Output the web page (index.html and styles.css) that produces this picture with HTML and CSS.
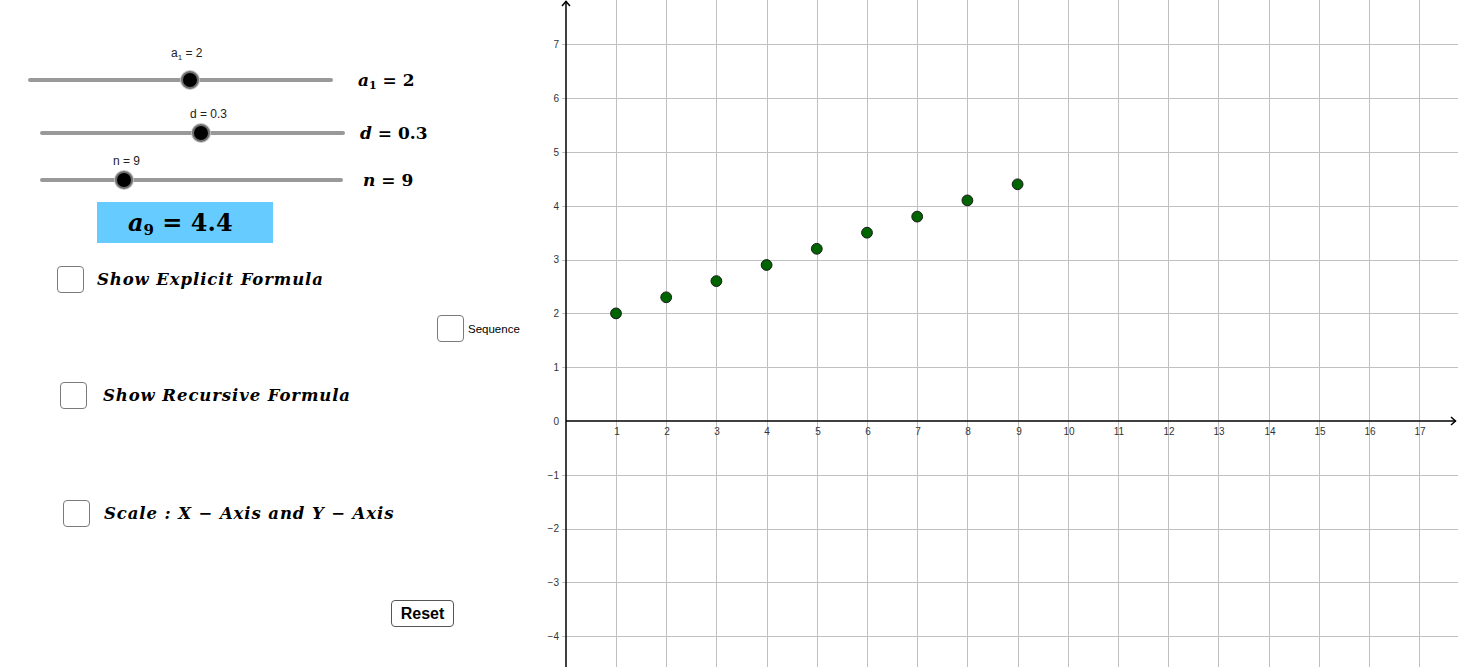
FILE: index.html
```html
<!DOCTYPE html>
<html>
<head>
<meta charset="utf-8">
<link rel="stylesheet" href="styles.css">
</head>
<body>
<div class="app">
  <div class="panel">
    <div class="row row-s1">
      <div class="slider">
        <div class="track"></div>
        <div class="knob" style="left:162px"></div>
        <div class="slabel s1lab" style="left:143px">a<sub>1</sub> = 2</div>
      </div>
      <div class="math mlab1"><i>a</i><sub>1</sub> <span class="eq">=</span> <span class="num">2</span></div>
    </div>
    <div class="row row-s2">
      <div class="slider">
        <div class="track"></div>
        <div class="knob" style="left:161px"></div>
        <div class="slabel" style="left:150px">d = 0.3</div>
      </div>
      <div class="math mlab2"><i>d</i> <span class="eq">=</span> <span class="num">0.3</span></div>
    </div>
    <div class="row row-s3">
      <div class="slider short">
        <div class="track"></div>
        <div class="knob" style="left:84px"></div>
        <div class="slabel" style="left:73px">n = 9</div>
      </div>
      <div class="math mlab3"><i>n</i> <span class="eq">=</span> <span class="num">9</span></div>
    </div>
    <div class="result"><span class="math big"><i>a</i><sub>9</sub> <span class="eq">=</span> <span class="num">4.4</span></span></div>
    <div class="cbrow cb1"><span class="box"></span><span class="math ital">Show Explicit Formula</span></div>
    <div class="cbrow cbseq"><span class="box"></span><span class="seqtext">Sequence</span></div>
    <div class="cbrow cb2"><span class="box"></span><span class="math ital">Show Recursive Formula</span></div>
    <div class="cbrow cb3"><span class="box"></span><span class="math ital">Scale : X − Axis and Y − Axis</span></div>
    <div class="btnrow"><button class="reset">Reset</button></div>
  </div>
  <svg class="graph" viewBox="535 0 923 667" width="923" height="667" xmlns="http://www.w3.org/2000/svg">
    <g class="grid" stroke="#c0c0c0" stroke-width="1" shape-rendering="crispEdges">
      <line x1="616" y1="0" x2="616" y2="667"/>
      <line x1="666" y1="0" x2="666" y2="667"/>
      <line x1="716" y1="0" x2="716" y2="667"/>
      <line x1="767" y1="0" x2="767" y2="667"/>
      <line x1="817" y1="0" x2="817" y2="667"/>
      <line x1="867" y1="0" x2="867" y2="667"/>
      <line x1="917" y1="0" x2="917" y2="667"/>
      <line x1="967" y1="0" x2="967" y2="667"/>
      <line x1="1018" y1="0" x2="1018" y2="667"/>
      <line x1="1068" y1="0" x2="1068" y2="667"/>
      <line x1="1118" y1="0" x2="1118" y2="667"/>
      <line x1="1168" y1="0" x2="1168" y2="667"/>
      <line x1="1218" y1="0" x2="1218" y2="667"/>
      <line x1="1269" y1="0" x2="1269" y2="667"/>
      <line x1="1319" y1="0" x2="1319" y2="667"/>
      <line x1="1369" y1="0" x2="1369" y2="667"/>
      <line x1="1419" y1="0" x2="1419" y2="667"/>
      <line x1="562" y1="44" x2="1458" y2="44"/>
      <line x1="562" y1="98" x2="1458" y2="98"/>
      <line x1="562" y1="152" x2="1458" y2="152"/>
      <line x1="562" y1="206" x2="1458" y2="206"/>
      <line x1="562" y1="260" x2="1458" y2="260"/>
      <line x1="562" y1="313" x2="1458" y2="313"/>
      <line x1="562" y1="367" x2="1458" y2="367"/>
      <line x1="562" y1="475" x2="1458" y2="475"/>
      <line x1="562" y1="529" x2="1458" y2="529"/>
      <line x1="562" y1="582" x2="1458" y2="582"/>
      <line x1="562" y1="636" x2="1458" y2="636"/>
    </g>
    <g class="axes" stroke="#000" stroke-width="1.5" fill="none">
      <line x1="566" y1="1" x2="566" y2="667"/>
      <polyline points="562,6 566,1.5 570,6"/>
      <line x1="566" y1="421" x2="1456" y2="421"/>
      <polyline points="1451,417 1455.5,421 1451,425"/>
    </g>
    <g class="xl" text-anchor="middle">
      <text x="617" y="435">1</text>
      <text x="667" y="435">2</text>
      <text x="717" y="435">3</text>
      <text x="767" y="435">4</text>
      <text x="818" y="435">5</text>
      <text x="868" y="435">6</text>
      <text x="918" y="435">7</text>
      <text x="968" y="435">8</text>
      <text x="1019" y="435">9</text>
      <text x="1069" y="435">10</text>
      <text x="1119" y="435">11</text>
      <text x="1169" y="435">12</text>
      <text x="1219" y="435">13</text>
      <text x="1270" y="435">14</text>
      <text x="1320" y="435">15</text>
      <text x="1370" y="435">16</text>
      <text x="1420" y="435">17</text>
    </g>
    <g class="yl" text-anchor="end">
      <text x="559" y="48">7</text>
      <text x="559" y="102">6</text>
      <text x="559" y="156">5</text>
      <text x="559" y="210">4</text>
      <text x="559" y="263">3</text>
      <text x="559" y="317">2</text>
      <text x="559" y="371">1</text>
      <text x="559" y="425">0</text>
      <text x="559" y="479">−1</text>
      <text x="559" y="532">−2</text>
      <text x="559" y="586">−3</text>
      <text x="559" y="640">−4</text>
    </g>
    <g class="pts" fill="#006400" stroke="#1a1a1a" stroke-width="1">
      <circle cx="616" cy="313.4" r="5.4"/>
      <circle cx="666.2" cy="297.3" r="5.4"/>
      <circle cx="716.4" cy="281.1" r="5.4"/>
      <circle cx="766.6" cy="265" r="5.4"/>
      <circle cx="816.8" cy="248.8" r="5.4"/>
      <circle cx="867" cy="232.7" r="5.4"/>
      <circle cx="917.2" cy="216.6" r="5.4"/>
      <circle cx="967.4" cy="200.4" r="5.4"/>
      <circle cx="1017.6" cy="184.3" r="5.4"/>
    </g>
  </svg>
</div>
</body>
</html>
```
FILE: styles.css
```css
html, body {
  margin: 0;
  padding: 0;
  background: #fff;
}
body {
  font-family: "Liberation Sans", Arial, sans-serif;
  color: #000;
}
.app {
  display: flex;
  width: 1458px;
  height: 667px;
  overflow: hidden;
}
.panel {
  width: 535px;
  flex: none;
  display: flex;
  flex-direction: column;
  align-items: flex-start;
}
.graph {
  flex: none;
  display: block;
}
.graph text {
  font-family: "Liberation Sans", Arial, sans-serif;
  font-size: 10px;
  fill: #333;
}

/* slider rows */
.row {
  display: flex;
  align-items: center;
  height: 24px;
}
.row-s1 { margin-top: 68px; margin-left: 28px; }
.row-s2 { margin-top: 29px; margin-left: 40px; }
.row-s3 { margin-top: 23px; margin-left: 40px; }
.slider {
  position: relative;
  width: 305px;
  height: 24px;
}
.slider.short { width: 303px; }
.track {
  position: absolute;
  left: 0;
  right: 0;
  top: 10px;
  height: 4px;
  border-radius: 2px;
  background: #999;
}
.knob {
  position: absolute;
  top: 3px;
  width: 14px;
  height: 14px;
  margin-left: -9px;
  border-radius: 50%;
  background: #000;
  border: 2px solid #6e6e6e;
  box-shadow: 0 0 0 1px #c4c4c4;
}
.slabel {
  position: absolute;
  top: -14px;
  font-size: 12px;
  color: #222;
  white-space: nowrap;
  line-height: 14px;
}
.s1lab { top: -22px; }
.slabel sub { font-size: 8px; vertical-align: -3px; line-height: 0; }

.math {
  font-family: "DejaVu Serif", "Liberation Serif", serif;
  font-weight: bold;
  font-size: 17px;
  white-space: nowrap;
}
.math i { font-style: italic; }
.math sub { font-size: 11px; vertical-align: -3px; line-height: 0; font-weight: bold; }
.math .num, .math .eq { font-style: normal; }
.mlab1 { margin-left: 25px; }
.mlab2 { margin-left: 15px; }
.mlab3 { margin-left: 20px; }

.result {
  margin-top: 10px;
  margin-left: 97px;
  width: 176px;
  height: 41px;
  background: #66ccff;
  display: flex;
  align-items: center;
  box-sizing: border-box;
  padding-left: 31px;
}
.math.big { font-size: 24px; }
.math.big sub { font-size: 15px; vertical-align: -4px; }

/* checkboxes */
.cbrow {
  display: flex;
  align-items: center;
}
.box {
  display: block;
  width: 25px;
  height: 25px;
  border: 1px solid #7a7a7a;
  border-radius: 4px;
  background: #fff;
  flex: none;
}
.ital { font-style: italic; font-size: 16.5px; letter-spacing: 0.9px; }
.cb1 { margin-top: 23px; margin-left: 57px; gap: 13px; }
.cbseq { margin-top: 22px; margin-left: 437px; gap: 4px; }
.cb2 { margin-top: 40px; margin-left: 60px; gap: 16px; }
.cb3 { margin-top: 91px; margin-left: 63px; gap: 14px; }
.seqtext {
  font-size: 11.5px;
  color: #000;
}

.btnrow {
  margin-top: 73px;
  margin-left: 391px;
}
.reset {
  width: 63px;
  height: 27px;
  padding: 0;
  border: 1px solid #555;
  border-radius: 4px;
  background: #fff;
  font-family: "Liberation Sans", Arial, sans-serif;
  font-weight: bold;
  font-size: 16px;
  color: #000;
}
```
